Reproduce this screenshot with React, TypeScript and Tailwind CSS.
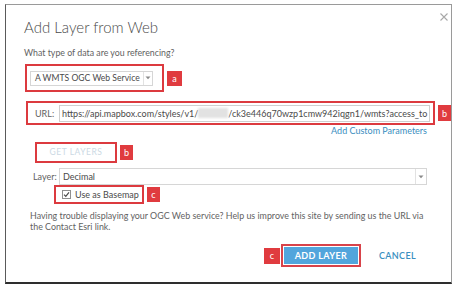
import React from "react";

function Badge({label, className = ""}: {label: string; className?: string}) {
    return (
        <span
            className={`flex shrink-0 items-center justify-center bg-[#e03b3f] text-[9px] leading-none text-white ${className}`}
        >
            {label}
        </span>
    );
}

function Caret() {
    return (
        <svg width="6" height="4" viewBox="0 0 6 4" aria-hidden="true">
            <path d="M0.5 0.5 L3 3.2 L5.5 0.5 Z" fill="#8a8a8a"/>
        </svg>
    );
}

export default function App() {
    return (
        <div className="h-[289px] w-[458px] bg-white pl-[5px] pt-[4px] font-['Lato',sans-serif] text-[#626262]">
            <div className="relative h-[280px] w-[447px] border border-b-2 border-[#9a9a9a] border-b-[#2e2e2e] border-l-[#5a5a5a]">
                {/* close */}
                <svg
                    className="absolute left-[434px] top-[8px]"
                    width="8"
                    height="8"
                    viewBox="0 0 8 8"
                    aria-hidden="true"
                >
                    <path d="M0.5 0.5 L7.5 7.5 M7.5 0.5 L0.5 7.5" stroke="#a8a8a8" strokeWidth="1.1"/>
                </svg>

                <h1 className="ml-[18px] mt-[12px] text-[15px] font-light leading-[20px] text-[#4a4a4a]">
                    Add Layer from Web
                </h1>

                <p className="ml-[18px] mt-[10px] whitespace-nowrap text-[8.8px] leading-[12px]">
                    What type of data are you referencing?
                </p>

                {/* type select */}
                <div className="ml-[19px] mt-[5px] flex items-center">
                    <div className="flex h-[28px] w-[139px] items-center border-2 border-[#dc3a3f] pl-[3px]">
                        <div className="flex h-[15px] w-[123px] items-center border border-[#d6d6d6]">
                            <span className="flex-1 whitespace-nowrap pl-[4px] text-[8.6px] leading-none text-[#4a4a4a]">
                                A WMTS OGC Web Service
                            </span>
                            <span className="flex h-full w-[9px] shrink-0 items-center justify-center border-l border-[#e2e2e2]">
                                <Caret/>
                            </span>
                        </div>
                    </div>
                    <Badge label="a" className="ml-[3px] h-[15px] w-[15px]"/>
                </div>

                {/* url */}
                <div className="ml-[20px] mt-[9px] flex items-center">
                    <div className="flex h-[24px] w-[409px] items-center border-2 border-[#dc3a3f] pl-[7px]">
                        <span className="w-[24px] text-[9px] leading-none">URL:</span>
                        <div className="flex h-[17px] w-[371px] items-center overflow-hidden whitespace-nowrap border border-[#cfcfcf] pl-[2px] text-[9px] leading-none text-[#4a4a4a]">
                            <span>https://api.mapbox.com/styles/v1/</span>
                            <span className="inline-block h-[10px] w-[30px] shrink-0 bg-[#e2e2e2] blur-[1px]"/>
                            <span>/ck3e446q70wzp1cmw942iqgn1/wmts?access_to</span>
                        </div>
                    </div>
                    <Badge label="b" className="ml-[3px] h-[16px] w-[13px]"/>
                </div>

                <p className="pr-[24px] text-right text-[9px] leading-[12px] text-[#3a8ec0]">
                    Add Custom Parameters
                </p>

                {/* get layers */}
                <div className="ml-[29px] mt-[5px] flex items-center">
                    <div className="flex h-[21px] w-[82px] items-center justify-center whitespace-nowrap border-2 border-[#dc3a3f] text-[8.5px] tracking-[0.06em] text-[#cbd9e4]">
                        GET LAYERS
                    </div>
                    <Badge label="b" className="ml-[3px] h-[15px] w-[13px]"/>
                </div>

                {/* layer select */}
                <div className="ml-[27px] mt-[5px] flex items-center">
                    <span className="w-[26px] text-[9px] leading-none">Layer:</span>
                    <div className="flex h-[17px] w-[368px] items-center border border-[#d6d6d6]">
                        <span className="flex-1 pl-[3px] text-[9px] leading-none text-[#4a4a4a]">Decimal</span>
                        <span className="flex h-full w-[11px] items-center justify-center border-l border-[#e2e2e2]">
                            <Caret/>
                        </span>
                    </div>
                </div>

                {/* basemap */}
                <div className="ml-[48px] flex items-center">
                    <div className="flex h-[19px] w-[90px] items-center gap-[4px] border-2 border-[#dc3a3f] pl-[6px]">
                        <span className="flex h-[9px] w-[9px] shrink-0 items-center justify-center border border-[#8f8f8f] bg-white">
                            <svg width="7" height="7" viewBox="0 0 7 7" aria-hidden="true">
                                <path d="M1 3.6 L2.8 5.4 L6 1.4" fill="none" stroke="#4a4a4a" strokeWidth="1.2"/>
                            </svg>
                        </span>
                        <span className="whitespace-nowrap text-[9px] leading-none text-[#4a4a4a]">Use as Basemap</span>
                    </div>
                    <Badge label="c" className="ml-[3px] h-[15px] w-[13px]"/>
                </div>

                <p className="ml-[24px] mt-[6px] whitespace-nowrap text-[8.9px] leading-[11px]">
                    Having trouble displaying your OGC Web service? Help us improve this site by sending us the URL via
                    <br/>
                    the Contact Esri link.
                </p>

                {/* actions */}
                <div className="mt-[12px] flex items-center justify-end pr-[35px]">
                    <Badge label="c" className="mr-[1px] h-[16px] w-[16px]"/>
                    <div className="h-[23px] w-[80px] border-2 border-[#d8434a] p-[1px]">
                        <div className="flex h-full w-full items-center justify-center bg-[#52a5dc] text-[9px] font-bold tracking-[0.04em] text-white">
                            ADD LAYER
                        </div>
                    </div>
                    <span className="ml-[18px] text-[9px] font-semibold tracking-[0.04em] text-[#3a8ec0]">
                        CANCEL
                    </span>
                </div>
            </div>
        </div>
    );
}
